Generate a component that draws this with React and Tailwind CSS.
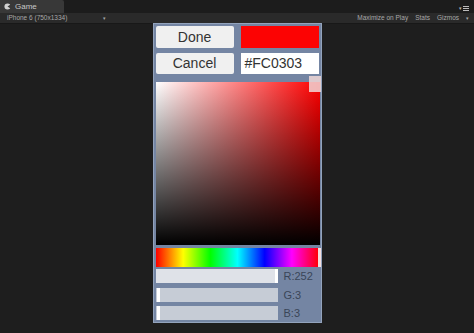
import React from "react";

export default function App() {
  const font = { fontFamily: '"Liberation Sans", Arial, sans-serif' };
  return (
    <div className="w-[474px] h-[333px] bg-[#1e1e1e] flex flex-col overflow-hidden" style={font}>
      {/* tab strip */}
      <div className="h-[13px] bg-[#1c1c1c] flex items-end justify-between">
        <div className="w-[64px] h-[13px] bg-[#383838] rounded-tr-[2px] flex items-center pl-[4px] gap-[4px]">
          <svg width="7" height="7" viewBox="0 0 8 8">
            <circle cx="4" cy="4" r="3.5" fill="#d0d0d0" />
            <path d="M4 4 L8 1.5 L8 6.5 Z" fill="#383838" />
          </svg>
          <span className="text-[8px] leading-none text-[#c8c8c8]">Game</span>
        </div>
        <div className="flex items-center pr-[5px] pb-[2px] gap-[1px]">
          <span className="text-[5px] leading-none text-[#bbbbbb]">▾</span>
          <div className="flex flex-col gap-[1px]">
            <div className="w-[6px] h-[1px] bg-[#bbbbbb]" />
            <div className="w-[6px] h-[1px] bg-[#bbbbbb]" />
            <div className="w-[6px] h-[1px] bg-[#bbbbbb]" />
          </div>
        </div>
      </div>
      {/* toolbar */}
      <div className="h-[11px] bg-[#2a2a2a] border-b border-[#181818] flex items-center justify-between text-[6.5px] leading-none text-[#a8a8a8]">
        <div className="flex items-center pl-[7px]">
          <span>iPhone 6 (750x1334)</span>
          <span className="ml-[36px] text-[5px]">▾</span>
        </div>
        <div className="flex items-center gap-[7px] pr-[5px]">
          <span>Maximize on Play</span>
          <span>Stats</span>
          <span>Gizmos</span>
          <span className="text-[5px]">▾</span>
        </div>
      </div>
      {/* game view */}
      <div className="flex-1 flex justify-center">
        <div className="w-[169px] h-[300px] mt-[-1px] bg-[#7485a3] border border-[#93a3bc] pl-[2px] pt-[2px] flex flex-col">
          <div className="flex gap-[7px] h-[22px]">
            <div className="w-[78px] h-[22px] bg-[#f0f0f0] rounded-[2px] flex items-center justify-center text-[14px] text-[#333]">
              Done
            </div>
            <div className="w-[78px] h-[22px] bg-[#fc0303]" />
          </div>
          <div className="flex gap-[7px] h-[21px] mt-[5px]">
            <div className="w-[78px] h-[21px] bg-[#f0f0f0] rounded-[2px] flex items-center justify-center text-[14px] text-[#333]">
              Cancel
            </div>
            <div className="w-[78px] h-[21px] bg-white flex items-center pl-[4px] text-[14px] text-[#333]">
              #FC0303
            </div>
          </div>
          <div className="relative mt-[8px] w-[164px] h-[163px] bg-[linear-gradient(to_right,#ffffff,#ff0000)]">
            <div className="absolute inset-0 bg-[linear-gradient(to_bottom,rgba(0,0,0,0),#000000)]" />
            <div className="absolute right-[-1px] top-[-6px] w-[12px] h-[16px] bg-[rgba(240,215,215,0.85)]" />
          </div>
          <div className="relative mt-[3px] w-[163px] h-[19px] bg-[linear-gradient(to_right,#ff0000,#ffff00,#00ff00,#00ffff,#0000ff,#ff00ff,#ff0000)]">
            <div className="absolute right-[-2px] top-0 w-[3px] h-[19px] bg-[#f4dede]" />
          </div>
          <div className="flex items-center mt-[2px] h-[14px]">
            <div className="relative w-[122px] h-[14px] bg-[#dfe2e8]">
              <div className="absolute right-0 top-0 w-[3px] h-[14px] bg-white" />
            </div>
            <span className="ml-[6px] text-[11px] text-[#3a4558]">R:252</span>
          </div>
          <div className="flex items-center mt-[5px] h-[14px]">
            <div className="relative w-[122px] h-[14px] bg-[#c6ccd6]">
              <div className="absolute left-[1px] top-0 w-[3px] h-[14px] bg-white" />
            </div>
            <span className="ml-[6px] text-[11px] text-[#3a4558]">G:3</span>
          </div>
          <div className="flex items-center mt-[4px] h-[14px]">
            <div className="relative w-[122px] h-[14px] bg-[#c6ccd6]">
              <div className="absolute left-[1px] top-0 w-[3px] h-[14px] bg-white" />
            </div>
            <span className="ml-[6px] text-[11px] text-[#3a4558]">B:3</span>
          </div>
        </div>
      </div>
    </div>
  );
}
